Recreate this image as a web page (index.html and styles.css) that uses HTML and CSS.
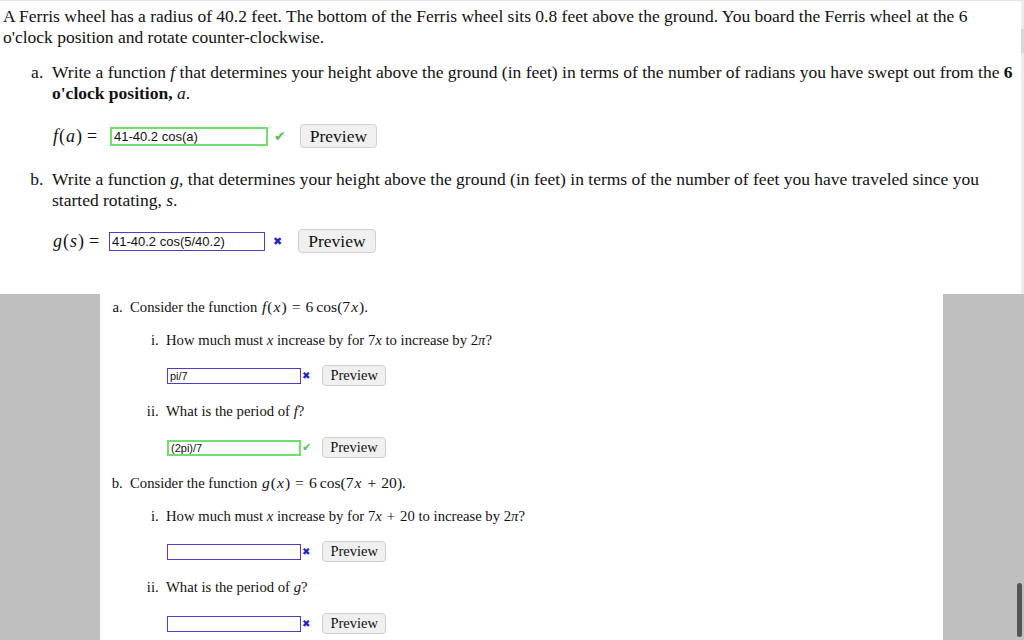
FILE: index.html
```html
<!DOCTYPE html>
<html lang="en">
<head>
    <meta charset="UTF-8">
    <meta name="viewport" content="width=device-width, initial-scale=1.0">
    <title>Ferris Wheel</title>
    <link rel="stylesheet" href="styles.css">
</head>
<body>
    <div class="intro">
        <p class="lead">A Ferris wheel has a radius of 40.2 feet. The bottom of the Ferris wheel sits 0.8 feet above the ground. You board the Ferris wheel at the 6<br>o'clock position and rotate counter-clockwise.</p>
        <ol class="parts">
            <li class="part-a">
                <p>Write a function <i class="mv">f</i> that determines your height above the ground (in feet) in terms of the number of radians you have swept out from the <b>6</b><br><b>o'clock position,</b> <i class="mv">a</i>.</p>
                <div class="answer">
                    <span class="math"><i>f</i>(<i>a</i>)<span class="eq">=</span></span>
                    <input class="ans ok" type="text" value="41-40.2 cos(a)">
                    <span class="mark ok">&#10004;</span>
                    <button class="preview">Preview</button>
                </div>
            </li>
            <li class="part-b">
                <p>Write a function <i class="mv">g</i>, that determines your height above the ground (in feet) in terms of the number of feet you have traveled since you<br>started rotating, <i class="mv">s</i>.</p>
                <div class="answer">
                    <span class="math"><i>g</i>(<i>s</i>)<span class="eq">=</span></span>
                    <input class="ans bad" type="text" value="41-40.2 cos(5/40.2)">
                    <span class="mark bad">&#10006;</span>
                    <button class="preview">Preview</button>
                </div>
            </li>
        </ol>
        <div class="bar-top"></div>
    </div>

    <div class="panel">
        <div class="sheet">
            <ol class="q">
                <li>
                    <p>Consider the function <span class="m"><i>f</i>(<i>x</i>)<span class="eq">=</span>6&#8201;cos(7<i>x</i>)</span>.</p>
                    <ol class="sub">
                        <li>
                            <p>How much must <i>x</i> increase by for 7<i>x</i> to increase by 2<i>&pi;</i>?</p>
                            <div class="row">
                                <input class="small bad" type="text" value="pi/7">
                                <span class="mark bad">&#10006;</span>
                                <button class="preview sm">Preview</button>
                            </div>
                        </li>
                        <li>
                            <p>What is the period of <i>f</i>?</p>
                            <div class="row">
                                <input class="small ok" type="text" value="(2pi)/7">
                                <span class="mark ok">&#10004;</span>
                                <button class="preview sm">Preview</button>
                            </div>
                        </li>
                    </ol>
                </li>
                <li>
                    <p>Consider the function <span class="m"><i>g</i>(<i>x</i>)<span class="eq">=</span>6&#8201;cos(7<i>x</i><span class="eq">+</span>20)</span>.</p>
                    <ol class="sub">
                        <li>
                            <p>How much must <i>x</i> increase by for 7<i>x</i><span class="eq">+</span>20 to increase by 2<i>&pi;</i>?</p>
                            <div class="row">
                                <input class="small bad" type="text" value="">
                                <span class="mark bad">&#10006;</span>
                                <button class="preview sm">Preview</button>
                            </div>
                        </li>
                        <li>
                            <p>What is the period of <i>g</i>?</p>
                            <div class="row">
                                <input class="small bad" type="text" value="">
                                <span class="mark bad">&#10006;</span>
                                <button class="preview sm">Preview</button>
                            </div>
                        </li>
                    </ol>
                </li>
            </ol>
        </div>
        <div class="thumb"></div>
    </div>
</body>
</html>
```
FILE: styles.css
```css
* {
    box-sizing: border-box;
}

body {
    margin: 0;
    background-color: #ffffff;
    color: #111;
    font-family: "Liberation Serif", "Times New Roman", serif;
}

p {
    margin: 0;
}

i {
    font-style: italic;
}

.eq {
    margin: 0 5px;
}

/* top part */
.intro {
    position: relative;
    height: 294px;
    padding: 5px 0 0 3px;
    font-size: 17.5px;
    line-height: 21px;
    border-top: 1px solid #e4e4e4;
    border-right: 3px solid #ececec;
}

.bar-top {
    position: absolute;
    top: 28px;
    right: -3px;
    width: 3px;
    height: 24px;
    background-color: #d8d8d8;
}

.parts {
    list-style-type: lower-alpha;
    margin: 14px 0 0 0;
    padding-left: 49px;
}

.parts li::marker {
    content: counter(list-item, lower-alpha) ".  ";
}

.part-b {
    margin-top: 20px;
}

.answer {
    display: flex;
    align-items: center;
    height: 26px;
    margin-top: 19px;
}

.part-b .answer {
    margin-top: 17px;
}

.math {
    display: inline-block;
    width: 58px;
    font-size: 18px;
}

.math i {
    padding: 0 1px;
}

.part-b .math {
    width: 57px;
}

.ans {
    width: 158px;
    height: 19px;
    padding: 0 2px;
    font-family: "Liberation Sans", Arial, sans-serif;
    font-size: 13px;
    color: #111;
    outline: none;
}

.part-b .ans {
    width: 156px;
}

input.ok {
    border: 2px solid #6fe06f;
}

input.bad {
    border: 1.5px solid #4a3fc4;
}

.mark {
    font-family: "DejaVu Sans", sans-serif;
    font-size: 11px;
}

.mark.ok {
    font-size: 14px;
    color: #4fc24f;
    margin: 0 14px 0 6px;
}

.mark.bad {
    color: #2424c8;
    margin: 0 16px 0 8px;
}

.preview {
    font-family: "Liberation Serif", "Times New Roman", serif;
    font-size: 17.5px;
    height: 24px;
    padding: 0 9px;
    background-color: #f0f0f0;
    border: 1px solid #cfcfcf;
    border-radius: 4px;
    color: #111;
}

/* grey panel */
.panel {
    position: relative;
    background-color: #bfbfbf;
    height: 346px;
    padding: 0 81px 0 100px;
}

.sheet {
    background-color: #ffffff;
    height: 100%;
    padding: 4px 0 0 12px;
    font-size: 14.7px;
    line-height: 18px;
}

.m {
    font-size: 15.6px;
}

.m i {
    padding: 0 1px;
}

.q {
    margin: 0;
    padding-left: 18px;
    list-style-type: lower-alpha;
}

.q > li::marker {
    content: counter(list-item, lower-alpha) ".  ";
}

.q > li + li {
    margin-top: 16px;
}

.sub {
    margin: 15px 0 0 0;
    padding-left: 36px;
    list-style-type: lower-roman;
}

.sub > li::marker {
    content: counter(list-item, lower-roman) ".  ";
}

.sub > li + li {
    margin-top: 16px;
}

.sub > li + li .row {
    margin-top: 17px;
}

.row {
    display: flex;
    align-items: center;
    height: 21px;
    margin: 16px 0 0 1px;
}

.small {
    width: 134px;
    height: 16px;
    padding: 0 2px;
    font-family: "Liberation Sans", Arial, sans-serif;
    font-size: 11px;
    color: #111;
    outline: none;
}

.row .mark {
    font-size: 10px;
}

.row .mark.bad {
    margin: 0 12px 0 1px;
}

.row .mark.ok {
    font-size: 11px;
    margin: 0 11px 0 1px;
}

.preview.sm {
    font-size: 14.5px;
    height: 21px;
    padding: 0 7px;
}

.thumb {
    position: absolute;
    right: 2px;
    top: 289px;
    width: 5px;
    height: 54px;
    border-radius: 3px;
    background-color: #555;
}
```
